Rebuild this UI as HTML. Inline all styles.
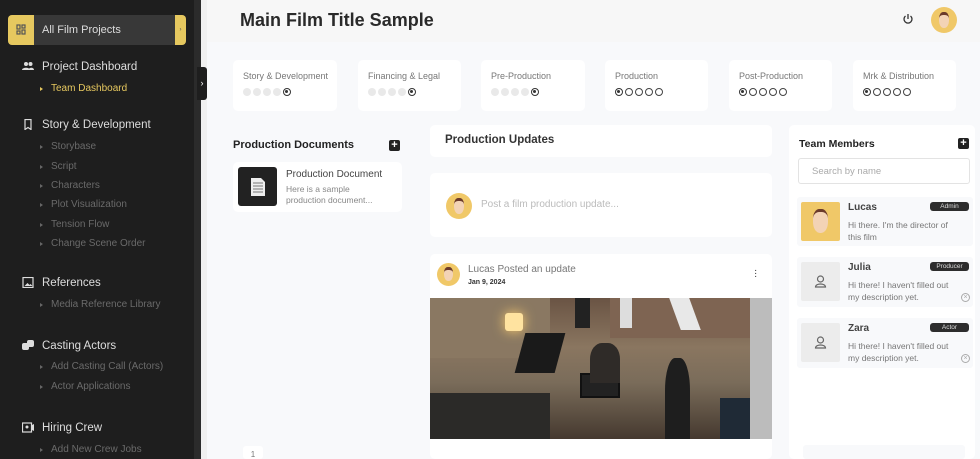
<!DOCTYPE html>
<html><head><style>
*{box-sizing:border-box;margin:0;padding:0}
body{width:980px;height:459px;overflow:hidden;background:#f8f9fb;font-family:"Liberation Sans",sans-serif;position:relative}
.sb{position:absolute;left:0;top:0;width:194px;height:459px;background:#1e1e1e}
.sb2{position:absolute;left:194px;top:0;width:7px;height:459px;background:#2b2b2b}
.sb3{position:absolute;left:201px;top:0;width:6px;height:459px;background:#f0f0f0}
.tog{position:absolute;left:197px;top:67px;width:10px;height:33px;background:#1e1e1e;border-radius:0 3px 3px 0;color:#fff;font-size:9px;line-height:33px;text-align:center}
.allp{position:absolute;left:8px;top:15px;width:178px;height:30px;background:#383838;border-radius:4px;overflow:hidden}
.allp .ic{position:absolute;left:0;top:0;width:26px;height:30px;background:#e6c85f}
.allp .r{position:absolute;right:0;top:0;width:11px;height:30px;background:#e6c85f;color:#555;font-size:6px;text-align:center;line-height:30px}
.allp span{position:absolute;left:34px;top:9px;color:#ddd;font-size:11px}
.h{position:absolute;left:42px;color:#ddd;font-size:11.5px}
.hi{position:absolute;left:22px;width:12px;height:11px}
.s{position:absolute;left:51px;color:#6a6a6a;font-size:10px}
.s:before{content:"";position:absolute;left:-11px;top:4px;border-left:3px solid #666;border-top:2px solid transparent;border-bottom:2px solid transparent}
.s.a{color:#e6c85f}.s.a:before{border-left-color:#e6c85f}
.top{position:absolute;left:207px;top:0;width:773px;height:42px;background:#f7f7f7}
.title{position:absolute;left:240px;top:10px;font-size:18px;font-weight:bold;color:#2a2a2a}
.card{position:absolute;background:#fff;border-radius:5px}
.st{font-size:9px;color:#777;position:absolute;left:10px;top:11px}
.dots{position:absolute;left:10px;top:28px;display:flex;gap:2px}
.d{width:8px;height:8px;border-radius:50%;background:#e9e9e9}
.d.f{background:#fff;border:1.5px solid #333;position:relative}
.d.f:after{content:"";position:absolute;left:1px;top:1px;width:3px;height:3px;border-radius:50%;background:#333}
.d.o{background:#fff;border:1.5px solid #444}
.bold{font-weight:bold;color:#222}
.plus{position:absolute;width:11px;height:11px;background:#222;border-radius:2px;color:#fff;font-size:11px;line-height:10px;text-align:center;font-weight:bold}
.av{border-radius:50%;background:#f0c868;position:absolute;overflow:hidden}
.face{position:absolute;left:30%;top:18%;width:40%;height:62%;background:#f3d3b5;border-radius:40% 40% 45% 45%;border-top:3px solid #6b3a2a}
.mem{position:absolute;left:797px;width:176px;height:74px;background:#f8f9fb;border-radius:3px}
.mem .pic{position:absolute;left:4px;top:5px;width:39px;height:39px;background:#ececec;border-radius:2px}
.mem .n{position:absolute;left:51px;top:5px;font-size:10px;font-weight:bold;color:#444}
.mem .t{position:absolute;left:51px;top:22px;font-size:8.5px;color:#777;line-height:12px;width:110px}
.badge{position:absolute;right:4px;top:5px;background:#2d2d2d;color:#ddd;font-size:6.5px;border-radius:3px;padding:1px 0;width:39px;text-align:center}
</style></head><body>
<div class="sb"></div><div class="sb2"></div><div class="sb3"></div><div class="tog">›</div>
<div class="allp"><div class="ic"><svg width="26" height="30"><g fill="none" stroke="#555" stroke-width="1.2"><rect x="9" y="10" width="3" height="4"/><rect x="14" y="10" width="3" height="3"/><rect x="9" y="16" width="3" height="3"/><rect x="14" y="15" width="3" height="4"/></g></svg></div><span>All Film Projects</span><div class="r">›</div></div>
<svg class="hi" style="top:61px" viewBox="0 0 12 11"><circle cx="4" cy="3" r="2" fill="#ddd"/><circle cx="8.5" cy="3" r="2" fill="#ddd"/><path d="M0 9c0-3 8-3 8 0zM6 9c1-3 6-3 6 0z" fill="#ddd"/></svg>
<div class="h" style="top:61px">Project Dashboard</div>
<div class="s a" style="top:83px">Team Dashboard</div>
<svg class="hi" style="top:119px" viewBox="0 0 12 11"><path d="M3 0.5h6v10l-3-2-3 2z" fill="none" stroke="#ddd" stroke-width="1.2"/></svg>
<div class="h" style="top:119px">Story &amp; Development</div>
<div class="s" style="top:141px">Storybase</div>
<div class="s" style="top:161px">Script</div>
<div class="s" style="top:180px">Characters</div>
<div class="s" style="top:199px">Plot Visualization</div>
<div class="s" style="top:219px">Tension Flow</div>
<div class="s" style="top:238px">Change Scene Order</div>
<svg class="hi" style="top:277px" viewBox="0 0 12 11"><rect x="1" y="0.5" width="10" height="10" fill="none" stroke="#ddd" stroke-width="1.2"/><path d="M2.5 9l3-3 2 2 1-1 2 2z" fill="#ddd"/></svg>
<div class="h" style="top:277px">References</div>
<div class="s" style="top:299px">Media Reference Library</div>
<svg class="hi" style="top:340px" viewBox="0 0 12 11"><rect x="0" y="3" width="7" height="7" rx="2" fill="#ddd"/><rect x="5" y="0" width="7" height="7" rx="2" fill="#ddd"/></svg>
<div class="h" style="top:340px">Casting Actors</div>
<div class="s" style="top:361px">Add Casting Call (Actors)</div>
<div class="s" style="top:381px">Actor Applications</div>
<svg class="hi" style="top:422px" viewBox="0 0 12 11"><rect x="0.5" y="1" width="9" height="9" fill="none" stroke="#ddd" stroke-width="1.2"/><circle cx="5" cy="5" r="1.5" fill="#ddd"/><path d="M10 3l2-1v7l-2-1z" fill="#ddd"/></svg>
<div class="h" style="top:422px">Hiring Crew</div>
<div class="s" style="top:444px">Add New Crew Jobs</div>

<div class="top"></div>
<div class="title">Main Film Title Sample</div>
<svg style="position:absolute;left:902px;top:13px" width="12" height="12" viewBox="0 0 12 12"><path d="M3.5 3a4 4 0 1 0 5 0M6 1v5" fill="none" stroke="#333" stroke-width="1.3"/></svg>
<div class="av" style="left:931px;top:7px;width:26px;height:26px"><div class="face"></div></div>

<div class="card" style="left:233px;top:60px;width:104px;height:51px"><div class="st">Story &amp; Development</div><div class="dots"><i class="d"></i><i class="d"></i><i class="d"></i><i class="d"></i><i class="d f"></i></div></div>
<div class="card" style="left:358px;top:60px;width:103px;height:51px"><div class="st">Financing &amp; Legal</div><div class="dots"><i class="d"></i><i class="d"></i><i class="d"></i><i class="d"></i><i class="d f"></i></div></div>
<div class="card" style="left:481px;top:60px;width:104px;height:51px"><div class="st">Pre-Production</div><div class="dots"><i class="d"></i><i class="d"></i><i class="d"></i><i class="d"></i><i class="d f"></i></div></div>
<div class="card" style="left:605px;top:60px;width:103px;height:51px"><div class="st">Production</div><div class="dots"><i class="d f"></i><i class="d o"></i><i class="d o"></i><i class="d o"></i><i class="d o"></i></div></div>
<div class="card" style="left:729px;top:60px;width:103px;height:51px"><div class="st">Post-Production</div><div class="dots"><i class="d f"></i><i class="d o"></i><i class="d o"></i><i class="d o"></i><i class="d o"></i></div></div>
<div class="card" style="left:853px;top:60px;width:103px;height:51px"><div class="st">Mrk &amp; Distribution</div><div class="dots"><i class="d f"></i><i class="d o"></i><i class="d o"></i><i class="d o"></i><i class="d o"></i></div></div>

<div class="bold" style="position:absolute;left:233px;top:139px;font-size:11px">Production Documents</div>
<div class="plus" style="left:389px;top:140px">+</div>
<div class="card" style="left:233px;top:162px;width:169px;height:50px"></div>
<div style="position:absolute;left:238px;top:167px;width:39px;height:39px;background:#222;border-radius:3px"><svg width="39" height="39"><path d="M13 11h10l4 4v14H13z" fill="#eee"/><path d="M15 16h10M15 19h10M15 22h10M15 25h10" stroke="#777" stroke-width="1"/></svg></div>
<div style="position:absolute;left:286px;top:169px;font-size:10px;color:#444">Production Document</div>
<div style="position:absolute;left:286px;top:184px;font-size:8.5px;color:#888;line-height:11px">Here is a sample<br>production document...</div>

<div class="card" style="left:430px;top:125px;width:342px;height:32px"><div class="bold" style="position:absolute;left:15px;top:9px;font-size:11.5px;color:#333">Production Updates</div></div>
<div class="card" style="left:430px;top:173px;width:342px;height:64px"><div class="av" style="left:16px;top:20px;width:26px;height:26px"><div class="face"></div></div><div style="position:absolute;left:51px;top:26px;font-size:10px;color:#bbb">Post a film production update...</div></div>
<div class="card" style="left:430px;top:254px;width:342px;height:205px">
<div class="av" style="left:7px;top:9px;width:23px;height:23px"><div class="face"></div></div>
<div style="position:absolute;left:38px;top:10px;font-size:10px;color:#777">Lucas Posted an update</div>
<div style="position:absolute;left:38px;top:25px;font-size:7px;font-weight:bold;color:#333">Jan 9, 2024</div>
<div style="position:absolute;left:324px;top:15px;font-size:10px;color:#333;line-height:3px">·<br>·<br>·</div>
<div style="position:absolute;left:0;top:44px;width:342px;height:141px;background:linear-gradient(180deg,#6a5444 0%,#8a7660 35%,#7a6c5a 60%,#45392f 100%);overflow:hidden">
<div style="position:absolute;left:0;top:0;width:120px;height:60px;background:#8a7862"></div>
<div style="position:absolute;left:75px;top:15px;width:18px;height:18px;background:#ffe3a0;border-radius:3px;box-shadow:0 0 12px #ffd070"></div>
<div style="position:absolute;left:145px;top:0;width:15px;height:30px;background:#222"></div>
<div style="position:absolute;left:180px;top:0;width:140px;height:40px;background:#7e6452"></div>
<div style="position:absolute;left:190px;top:0;width:12px;height:30px;background:#ddd"></div>
<div style="position:absolute;left:245px;top:0;width:20px;height:32px;background:#e8e8e8;transform:skewX(20deg)"></div>
<div style="position:absolute;left:320px;top:0;width:22px;height:141px;background:#bcbcbc"></div>
<div style="position:absolute;left:90px;top:35px;width:40px;height:40px;background:#1a1a1a;transform:skewX(-15deg)"></div>
<div style="position:absolute;left:0;top:95px;width:120px;height:46px;background:#2b2a28"></div>
<div style="position:absolute;left:150px;top:75px;width:40px;height:25px;background:#222;border:2px solid #111"></div>
<div style="position:absolute;left:160px;top:45px;width:30px;height:40px;background:#2f2b28;border-radius:40% 40% 0 0"></div>
<div style="position:absolute;left:235px;top:60px;width:25px;height:81px;background:#1e1e1e;border-radius:40% 40% 0 0"></div>
<div style="position:absolute;left:290px;top:100px;width:30px;height:41px;background:#1f2a36"></div>
</div>
</div>

<div class="card" style="left:789px;top:125px;width:186px;height:334px"></div>
<div class="bold" style="position:absolute;left:799px;top:138px;font-size:10.5px">Team Members</div>
<div class="plus" style="left:958px;top:138px">+</div>
<div style="position:absolute;left:798px;top:158px;width:172px;height:26px;border:1px solid #e3e3e3;border-radius:3px;background:#fff"><span style="position:absolute;left:13px;top:7px;font-size:9.5px;color:#aaa">Search by name</span></div>
<div class="mem" style="top:197px;height:49px"><div class="pic" style="background:#f0c868;overflow:hidden"><div class="face"></div></div><div class="n">Lucas</div><div class="badge">Admin</div><div class="t">Hi there. I'm the director of this film</div></div>
<div class="mem" style="top:257px;height:50px"><div class="pic"><svg width="39" height="39"><circle cx="19.5" cy="17" r="3" fill="none" stroke="#666" stroke-width="1.2"/><path d="M14.5 25c0-4 10-4 10 0z" fill="none" stroke="#666" stroke-width="1.2"/></svg></div><div class="n">Julia</div><div class="badge">Producer</div><div class="t">Hi there! I haven't filled out my description yet.</div><div style="position:absolute;right:3px;top:36px;width:9px;height:9px;border:1px solid #aaa;border-radius:50%;font-size:7px;color:#aaa;text-align:center;line-height:7px">×</div></div>
<div class="mem" style="top:318px;height:50px"><div class="pic"><svg width="39" height="39"><circle cx="19.5" cy="17" r="3" fill="none" stroke="#666" stroke-width="1.2"/><path d="M14.5 25c0-4 10-4 10 0z" fill="none" stroke="#666" stroke-width="1.2"/></svg></div><div class="n">Zara</div><div class="badge">Actor</div><div class="t">Hi there! I haven't filled out my description yet.</div><div style="position:absolute;right:3px;top:36px;width:9px;height:9px;border:1px solid #aaa;border-radius:50%;font-size:7px;color:#aaa;text-align:center;line-height:7px">×</div></div>
<div style="position:absolute;left:803px;top:445px;width:162px;height:14px;background:#f8f9fb;border-radius:3px"></div>
<div style="position:absolute;left:243px;top:446px;width:20px;height:13px;background:#fff;border-radius:3px;font-size:8px;color:#777;text-align:center;padding-top:4px">1</div>
</body></html>
